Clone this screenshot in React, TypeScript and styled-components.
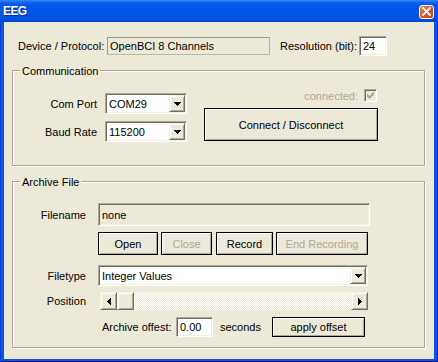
import React from "react";
import styled, { createGlobalStyle, css } from "styled-components";

const Global = createGlobalStyle`
  html, body { margin: 0; padding: 0; background: #ECE9D8; }
  body { font-family: "Liberation Sans", Arial, sans-serif; font-size: 11px; color: #000; }
  * { box-sizing: border-box; }
`;

const sunken = css`
  border-style: solid;
  border-width: 1px;
  border-color: #ACA899 #FFFFFF #FFFFFF #ACA899;
  box-shadow: inset 1px 1px 0 #716F64, inset -1px -1px 0 #F1EFE2;
`;

const raised = css`
  border-style: solid;
  border-width: 1px;
  border-color: #F1EFE2 #716F64 #716F64 #F1EFE2;
  box-shadow: inset 1px 1px 0 #FFFFFF, inset -1px -1px 0 #ACA899;
  background: #ECE9D8;
`;

const Frame = styled.div`
  width: 438px;
  height: 362px;
  display: flex;
  flex-direction: column;
  background: #0757E6;
  box-shadow: inset 1px 0 0 #0A3FD0, inset -1px 0 0 #0019A8, inset 0 -1px 0 #00138C;
`;

const TitleBar = styled.div`
  height: 22px;
  flex: none;
  display: flex;
  align-items: center;
  justify-content: space-between;
  padding: 0 4px 0 3px;
  background: linear-gradient(#3C8CF7 0, #1768EE 2px, #0458EC 4px, #0055E5 45%, #0054E2 80%, #0049D2 100%);
`;

const Title = styled.span`
  color: #fff;
  font-weight: bold;
  font-size: 12px;
  letter-spacing: -0.6px;
  text-shadow: 1px 1px 0 #0B2A9A;
`;

const CloseBtn = styled.div`
  width: 15px;
  height: 14px;
  margin-top: 1px;
  border: 1px solid #fff;
  border-radius: 3px;
  background: linear-gradient(135deg, #EA8A68 0%, #DD5A35 45%, #C8401C 100%);
  display: flex;
  align-items: center;
  justify-content: center;
`;

const Client = styled.div`
  flex: 1;
  margin: 0 4px 3px;
  background: #ECE9D8;
  display: flex;
  flex-direction: column;
  padding: 14px 9px 0 8px;
`;

const TopRow = styled.div`
  height: 20px;
  display: flex;
  align-items: center;
  padding-left: 6px;
`;

const Label = styled.span<{ $w?: number; $right?: boolean; $disabled?: boolean; $pl?: number }>`
  flex: none;
  white-space: nowrap;
  ${(p) => (p.$w ? `width: ${p.$w}px;` : "")}
  ${(p) => (p.$pl ? `padding-left: ${p.$pl}px;` : "")}
  text-align: ${(p) => (p.$right ? "right" : "left")};
  color: ${(p) => (p.$disabled ? "#ACA899" : "#000")};
`;

const StaticField = styled.div<{ $w: number }>`
  width: ${(p) => p.$w}px;
  height: 18px;
  border: 1px solid #B9B6A8;
  border-top-color: #9E9B8E;
  border-left-color: #9E9B8E;
  background: #ECE9D8;
  display: flex;
  align-items: center;
  padding-left: 2px;
`;

const Edit = styled.div<{ $w: number; $h: number; $readonly?: boolean }>`
  ${sunken};
  flex: none;
  width: ${(p) => p.$w}px;
  height: ${(p) => p.$h}px;
  background: ${(p) => (p.$readonly ? "#ECE9D8" : "#fff")};
  display: flex;
  align-items: center;
  padding-left: 3px;
`;

const Group = styled.div<{ $h: number; $mt: number }>`
  position: relative;
  flex: none;
  height: ${(p) => p.$h}px;
  margin-top: ${(p) => p.$mt}px;
  border: 1px solid #ACA899;
  box-shadow: 1px 1px 0 #fff, inset 1px 1px 0 #fff;
`;

const Caption = styled.span`
  position: absolute;
  top: -6px;
  left: 7px;
  padding: 0 2px;
  line-height: 13px;
  background: #ECE9D8;
`;

const CommBody = styled.div`
  display: flex;
`;

const CommLeft = styled.div`
  padding-top: 22px;
  display: grid;
  grid-template-columns: 84px 82px;
  column-gap: 8px;
  row-gap: 7px;
  align-items: center;
`;

const CommRight = styled.div`
  margin-left: 17px;
  padding-top: 18px;
  width: 174px;
  display: flex;
  flex-direction: column;
  align-items: flex-end;
`;

const ConnectedRow = styled.div`
  height: 13px;
  display: flex;
  align-items: center;
  gap: 6px;
  margin-right: 1px;
`;

const CheckBox = styled.div`
  ${sunken};
  width: 13px;
  height: 13px;
  background: #ECE9D8;
  display: flex;
  align-items: center;
  justify-content: center;
`;

const Button = styled.div<{ $w: number; $h: number; $disabled?: boolean; $mt?: number }>`
  flex: none;
  width: ${(p) => p.$w}px;
  height: ${(p) => p.$h}px;
  margin-top: ${(p) => p.$mt ?? 0}px;
  border: 1px solid #000;
  box-shadow: inset 1px 1px 0 #fff, inset -1px -1px 0 #ACA899;
  background: #ECE9D8;
  display: flex;
  align-items: center;
  justify-content: center;
  color: ${(p) => (p.$disabled ? "#ACA899" : "#000")};
  white-space: nowrap;
`;

const ComboBox = styled.div<{ $w: number; $h: number }>`
  ${sunken};
  width: ${(p) => p.$w}px;
  height: ${(p) => p.$h}px;
  background: #fff;
  display: flex;
  padding: 1px;
`;

const ComboText = styled.div`
  flex: 1;
  display: flex;
  align-items: center;
  padding-left: 2px;
`;

const ArrowBtn = styled.div<{ $w: number }>`
  ${raised};
  flex: none;
  width: ${(p) => p.$w}px;
  display: flex;
  align-items: center;
  justify-content: center;
`;

const ArchiveBody = styled.div`
  padding-top: 21px;
  display: flex;
  flex-direction: column;
`;

const FormRow = styled.div<{ $h: number; $mt?: number }>`
  height: ${(p) => p.$h}px;
  margin-top: ${(p) => p.$mt ?? 0}px;
  display: grid;
  grid-template-columns: 73px 1fr;
  column-gap: 12px;
  align-items: center;
`;

const Controls = styled.div<{ $pl?: number }>`
  display: flex;
  align-items: center;
  height: 100%;
  padding-left: ${(p) => p.$pl ?? 0}px;
`;

const ButtonStrip = styled.div`
  display: flex;
  height: 100%;
`;

const Gap = styled.div<{ $w: number }>`
  flex: none;
  width: ${(p) => p.$w}px;
`;

const ScrollBar = styled.div`
  margin-left: 2px;
  width: 268px;
  height: 18px;
  display: flex;
`;

const ScrollTrack = styled.div`
  flex: 1;
  display: flex;
  background: repeating-conic-gradient(#FFFFFF 0 25%, #ECE9D8 0 50%) 0 0 / 2px 2px;
`;

const Down = () => (
  <svg width="7" height="4" viewBox="0 0 7 4" shapeRendering="crispEdges">
    <rect x="0" y="0" width="7" height="1" fill="#000" />
    <rect x="1" y="1" width="5" height="1" fill="#000" />
    <rect x="2" y="2" width="3" height="1" fill="#000" />
    <rect x="3" y="3" width="1" height="1" fill="#000" />
  </svg>
);

const Side = ({ left }: { left?: boolean }) => (
  <svg width="4" height="7" viewBox="0 0 4 7" shapeRendering="crispEdges" style={left ? { transform: "scaleX(-1)" } : undefined}>
    <rect x="0" y="0" width="1" height="7" fill="#000" />
    <rect x="1" y="1" width="1" height="5" fill="#000" />
    <rect x="2" y="2" width="1" height="3" fill="#000" />
    <rect x="3" y="3" width="1" height="1" fill="#000" />
  </svg>
);

const Combo = ({ w, h, value }: { w: number; h: number; value: string }) => (
  <ComboBox $w={w} $h={h}>
    <ComboText>{value}</ComboText>
    <ArrowBtn $w={16}>
      <Down />
    </ArrowBtn>
  </ComboBox>
);

export default function App() {
  return (
    <>
      <Global />
      <Frame>
        <TitleBar>
          <Title>EEG</Title>
          <CloseBtn>
            <svg width="9" height="9" viewBox="0 0 9 9">
              <path d="M1 1L8 8M8 1L1 8" stroke="#fff" strokeWidth="1.8" strokeLinecap="square" />
            </svg>
          </CloseBtn>
        </TitleBar>
        <Client>
          <TopRow>
            <Label $w={89}>Device / Protocol:</Label>
            <StaticField $w={163}>OpenBCI 8 Channels</StaticField>
            <Gap $w={10} />
            <Label $w={79}>Resolution (bit):</Label>
            <Edit $w={28} $h={20}>24</Edit>
          </TopRow>

          <Group $h={96} $mt={14}>
            <Caption>Communication</Caption>
            <CommBody>
              <CommLeft>
                <Label $right>Com Port</Label>
                <Combo w={82} h={21} value="COM29" />
                <Label $right>Baud Rate</Label>
                <Combo w={82} h={21} value="115200" />
              </CommLeft>
              <CommRight>
                <ConnectedRow>
                  <Label $disabled>connected:</Label>
                  <CheckBox>
                    <svg width="7" height="7" viewBox="0 0 7 7" shapeRendering="crispEdges">
                      <path d="M0 2h1v1h1v1h1V3h1V2h1V1h1V0h1v3H6v1H5v1H4v1H3v1H2V6H1V5H0z" fill="#ACA899" />
                    </svg>
                  </CheckBox>
                </ConnectedRow>
                <Button $w={174} $h={33} $mt={6}>Connect / Disconnect</Button>
              </CommRight>
            </CommBody>
          </Group>

          <Group $h={167} $mt={15}>
            <Caption>Archive File</Caption>
            <ArchiveBody>
              <FormRow $h={23}>
                <Label $right>Filename</Label>
                <Edit $w={272} $h={23} $readonly>none</Edit>
              </FormRow>
              <FormRow $h={23} $mt={6}>
                <span />
                <ButtonStrip>
                  <Button $w={60} $h={23}>Open</Button>
                  <Gap $w={3} />
                  <Button $w={51} $h={23} $disabled>Close</Button>
                  <Gap $w={4} />
                  <Button $w={57} $h={23}>Record</Button>
                  <Gap $w={3} />
                  <Button $w={92} $h={23} $disabled>End Recording</Button>
                </ButtonStrip>
              </FormRow>
              <FormRow $h={21} $mt={10}>
                <Label $right>Filetype</Label>
                <Combo w={270} h={21} value="Integer Values" />
              </FormRow>
              <FormRow $h={18} $mt={6}>
                <Label $right>Position</Label>
                <ScrollBar>
                  <ArrowBtn $w={17}>
                    <Side left />
                  </ArrowBtn>
                  <ScrollTrack>
                    <ArrowBtn $w={17} />
                  </ScrollTrack>
                  <ArrowBtn $w={17}>
                    <Side />
                  </ArrowBtn>
                </ScrollBar>
              </FormRow>
              <FormRow $h={20} $mt={7}>
                <span />
                <Controls $pl={4}>
                  <Label $w={74}>Archive offest:</Label>
                  <Edit $w={37} $h={20}>0.00</Edit>
                  <Label $w={59} $pl={7}>seconds</Label>
                  <Button $w={93} $h={20}>apply offset</Button>
                </Controls>
              </FormRow>
            </ArchiveBody>
          </Group>
        </Client>
      </Frame>
    </>
  );
}
